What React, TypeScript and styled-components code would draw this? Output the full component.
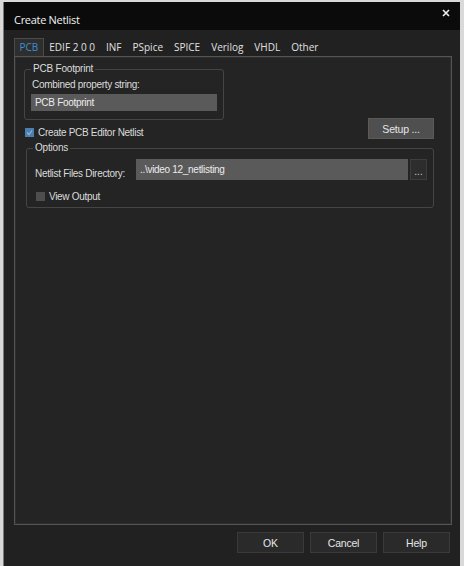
import React from "react";
import styled, { createGlobalStyle } from "styled-components";

const Global = createGlobalStyle`
  html, body { margin: 0; padding: 0; background: #d9d9d9; }
  body { font-family: "Liberation Sans", Arial, sans-serif; }
  * { box-sizing: border-box; }
`;

const Window = styled.div`
  margin: 2px 0 0 3px;
  width: 457px;
  height: 564px;
  background: #212121;
  border-left: 1px solid #7a7a7a;
  display: flex;
  flex-direction: column;
`;

const TitleBar = styled.div`
  height: 28px;
  background: #0b0b0b;
  display: flex;
  align-items: flex-start;
  justify-content: space-between;
  padding: 11px 10px 0 10px;
`;

const Title = styled.span`
  font-family: "Open Sans", "Noto Sans", sans-serif;
  font-size: 11px;
  letter-spacing: -0.3px;
  line-height: 14px;
  color: #f2f2f2;
`;

const Close = styled.span`
  margin-top: -4px;
  display: flex;
  align-items: center;
`;

const Content = styled.div`
  flex: 1;
  display: flex;
  flex-direction: column;
  padding: 8px 8px 0 10px;
`;

const Tabs = styled.div`
  display: flex;
  height: 18px;
  align-items: stretch;
`;

const Tab = styled.div<{ $active?: boolean }>`
  font-family: "Open Sans", "Noto Sans", sans-serif;
  font-size: 10px;
  line-height: 16px;
  padding: 0 4.5px;
  color: ${(p) => (p.$active ? "#3b8fd4" : "#e0e0e0")};
  background: ${(p) => (p.$active ? "#2e2e2e" : "transparent")};
  border: 1px solid ${(p) => (p.$active ? "#4a4a4a" : "transparent")};
  border-bottom: none;
`;

const Panel = styled.div`
  height: 469px;
  border: 1px solid #545454;
  box-shadow: inset 0 0 0 1px #2e2e2e;
  background: #242424;
  padding: 6px 0 0 9px;
  display: flex;
  flex-direction: column;
`;

const Group = styled.fieldset<{ $w?: number; $ml?: number; $mr?: number }>`
  margin: 0 ${(p) => (p.$mr ?? 0)}px 0 ${(p) => (p.$ml ?? 0)}px;
  ${(p) => (p.$w ? `width: ${p.$w}px;` : "")}
  border: 1px solid #454545;
  border-radius: 3px;
  padding: 0 6px 8px 6px;
  min-width: 0;
`;

const Legend = styled.legend`
  font-size: 10px;
  letter-spacing: -0.2px;
  line-height: 12px;
  color: #dcdcdc;
  padding: 0 2px;
  margin-left: 0;
`;

const Label = styled.div`
  font-size: 10px;
  line-height: 12px;
  color: #dcdcdc;
  letter-spacing: -0.3px;
`;

const TextBox = styled.div<{ $h: number }>`
  height: ${(p) => p.$h}px;
  background: #5a5a5a;
  color: #ececec;
  font-size: 10px;
  letter-spacing: -0.3px;
  padding: 0 4px;
  display: flex;
  align-items: center;
  flex: 1;
`;

const Row = styled.div`
  display: flex;
  align-items: center;
`;

const CheckRow = styled.label<{ $ml?: number }>`
  display: flex;
  align-items: center;
  gap: 4px;
  margin-left: ${(p) => p.$ml ?? 0}px;
  font-size: 10px;
  letter-spacing: -0.3px;
  color: #dcdcdc;
`;

const Box = styled.span<{ $checked?: boolean }>`
  width: 9px;
  height: 9px;
  background: ${(p) => (p.$checked ? "#4a7fb0" : "#4e4e4e")};
  display: flex;
  align-items: center;
  justify-content: center;
`;

const SetupRow = styled.div`
  display: flex;
  align-items: flex-start;
  justify-content: space-between;
  height: 21px;
  margin: -2px 17px 0 0;
`;

const Button = styled.div<{ $w: number; $h: number; $bg: string; $bd: string }>`
  width: ${(p) => p.$w}px;
  height: ${(p) => p.$h}px;
  background: ${(p) => p.$bg};
  border: 1px solid ${(p) => p.$bd};
  color: #e6e6e6;
  font-size: 10.5px;
  letter-spacing: -0.2px;
  display: flex;
  align-items: center;
  justify-content: center;
`;

const DotsButton = styled.div`
  width: 17px;
  height: 21px;
  margin-left: 2px;
  background: #2d2d2d;
  border: 1px solid #3d3d3d;
  color: #cfcfcf;
  font-size: 10px;
  display: flex;
  align-items: flex-end;
  justify-content: center;
  line-height: 14px;
`;

const Footer = styled.div`
  display: flex;
  justify-content: flex-end;
  gap: 6px;
  padding: 7px 2px 0 0;
`;

export default function App() {
  return (
    <>
      <Global />
      <Window>
        <TitleBar>
          <Title>Create Netlist</Title>
          <Close>
            <svg width="8" height="8" viewBox="0 0 8 8">
              <path d="M1 1 L7 7 M7 1 L1 7" stroke="#f0f0f0" strokeWidth="1.6" />
            </svg>
          </Close>
        </TitleBar>
        <Content>
          <Tabs>
            <Tab $active>PCB</Tab>
            <Tab>EDIF 2 0 0</Tab>
            <Tab>INF</Tab>
            <Tab>PSpice</Tab>
            <Tab>SPICE</Tab>
            <Tab>Verilog</Tab>
            <Tab>VHDL</Tab>
            <Tab>Other</Tab>
          </Tabs>
          <Panel>
            <Group $w={200}>
              <Legend>PCB Footprint</Legend>
              <Label style={{ margin: "4px 0 3px 1px" }}>Combined property string:</Label>
              <Row>
                <TextBox $h={17}>PCB Footprint</TextBox>
              </Row>
            </Group>
            <SetupRow>
              <CheckRow $ml={1} style={{ marginTop: 9 }}>
                <Box $checked>
                  <svg width="7" height="7" viewBox="0 0 7 7">
                    <path d="M1 3.5 L3 5.5 L6 1.5" stroke="#8fb8dc" strokeWidth="1.2" fill="none" />
                  </svg>
                </Box>
                Create PCB Editor Netlist
              </CheckRow>
              <Button $w={66} $h={21} $bg="#4f4f4f" $bd="#5a5a5a">Setup ...</Button>
            </SetupRow>
            <Group $ml={2} $mr={17} style={{ marginTop: 3 }}>
              <Legend>Options</Legend>
              <Row style={{ marginTop: 4, paddingLeft: 2 }}>
                <Label style={{ width: 101, marginTop: 10 }}>Netlist Files Directory:</Label>
                <TextBox $h={21}>..\video 12_netlisting</TextBox>
                <DotsButton>...</DotsButton>
              </Row>
              <CheckRow $ml={3} style={{ marginTop: 11, marginBottom: -3 }}>
                <Box />
                View Output
              </CheckRow>
            </Group>
          </Panel>
          <Footer>
            <Button $w={67} $h={21} $bg="#2a2a2a" $bd="#3a3a3a">OK</Button>
            <Button $w={67} $h={21} $bg="#2a2a2a" $bd="#3a3a3a">Cancel</Button>
            <Button $w={67} $h={21} $bg="#2a2a2a" $bd="#3a3a3a">Help</Button>
          </Footer>
        </Content>
      </Window>
    </>
  );
}
